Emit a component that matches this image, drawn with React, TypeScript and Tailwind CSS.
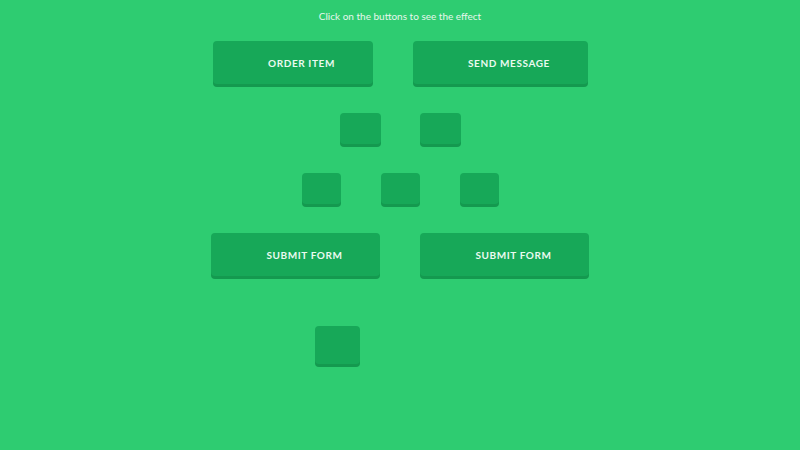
export default function App() {
  const btn =
    "flex items-center justify-center pt-[2px] rounded-[4px] bg-[#17a858] shadow-[0_3px_0_#14994f] text-[#eafaf0] font-bold uppercase text-[10px] tracking-[0.6px]";
  const sq = "rounded-[4px] bg-[#17a858] shadow-[0_3px_0_#14994f]";

  return (
    <div
      className="w-[800px] h-[450px] bg-[#2ecc71] overflow-hidden"
      style={{ fontFamily: "Lato, 'Open Sans', sans-serif" }}
    >
      <p className="pt-[10px] text-center text-[10px] leading-[13px] text-[#e6f7ec]">
        Click on the buttons to see the effect
      </p>

      {/* row 1 */}
      <div className="mt-[18px] flex justify-center gap-[40px]">
        <button className={`${btn} w-[160px] h-[43px] pl-[18px]`}>Order Item</button>
        <button className={`${btn} w-[175px] h-[43px] pl-[18px]`}>Send Message</button>
      </div>

      {/* row 2 */}
      <div className="mt-[29px] flex justify-center gap-[39px]">
        <div className={`${sq} w-[41px] h-[31px]`} />
        <div className={`${sq} w-[41px] h-[31px]`} />
      </div>

      {/* row 3 */}
      <div className="mt-[29px] flex justify-center gap-[40px]">
        <div className={`${sq} w-[39px] h-[31px]`} />
        <div className={`${sq} w-[39px] h-[31px]`} />
        <div className={`${sq} w-[39px] h-[31px]`} />
      </div>

      {/* row 4 */}
      <div className="mt-[29px] flex justify-center gap-[40px]">
        <button className={`${btn} w-[169px] h-[43px] pl-[18px]`}>Submit Form</button>
        <button className={`${btn} w-[169px] h-[43px] pl-[18px]`}>Submit Form</button>
      </div>

      {/* row 5 */}
      <div className="mt-[50px] pl-[315px]">
        <div className={`${sq} w-[45px] h-[38px] shadow-[0_2px_0_#14994f]`} />
      </div>
    </div>
  );
}
